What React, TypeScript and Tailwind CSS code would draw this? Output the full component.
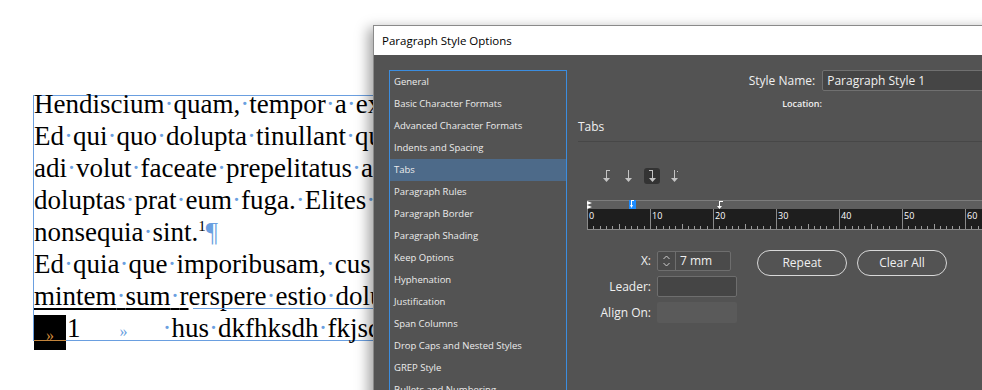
import React from 'react';

const sections = [
  'General',
  'Basic Character Formats',
  'Advanced Character Formats',
  'Indents and Spacing',
  'Tabs',
  'Paragraph Rules',
  'Paragraph Border',
  'Paragraph Shading',
  'Keep Options',
  'Hyphenation',
  'Justification',
  'Span Columns',
  'Drop Caps and Nested Styles',
  'GREP Style',
  'Bullets and Numbering',
];

function Dot() {
  return <span className="text-[#6a9fe0]">·</span>;
}

function Dotted({ text, lead }: { text: string; lead?: boolean }) {
  const words = text.split(' ');
  return (
    <>
      {words.map((w, i) => (
        <React.Fragment key={i}>
          {(i > 0 || lead) && <Dot />}
          {w}
        </React.Fragment>
      ))}
    </>
  );
}

function Document() {
  return (
    <div className="pl-[33px] pt-[95px]">
      <div className="h-[246px] w-[420px] border-y border-l border-[#6a9fe0] font-['Liberation_Serif',serif] text-[27px] leading-[32px] text-black">
        <div className="-mt-[8px] whitespace-nowrap">
          <div className="h-[32px]"><Dotted text="Hendiscium quam, tempor a exeribus" /></div>
          <div className="h-[32px]"><Dotted text="Ed qui quo dolupta tinullant quam" /></div>
          <div className="h-[32px]"><Dotted text="adi volut faceate prepelitatus aceped" /></div>
          <div className="h-[32px]"><Dotted text="doluptas prat eum fuga. Elites volor" /></div>
          <div className="h-[32px]">
            <Dotted text="nonsequia sint." />
            <span className="relative -top-[10px] text-[15px] leading-none">1</span>
            <span className="text-[#6a9fe0]">¶</span>
          </div>
          <div className="h-[32px]"><Dotted text="Ed quia que imporibusam, cus eatur" /></div>
          <div className="relative h-[32px]">
            <span className="underline decoration-2 underline-offset-[3px]"><Dotted text="mintem sum r" /></span>
            <Dotted text="erspere estio dolupta" />
            <div className="absolute left-[159px] right-0 top-[28px] h-px bg-[#6a9fe0]" />
          </div>
          <div className="h-[32px]">
            <span className="relative top-[3px] inline-flex h-[35px] w-[32px] flex-col items-center bg-black align-top">
              <span className="relative top-[4px] flex h-[25px] items-end text-[16px] leading-none text-[#d08a3a]">»</span>
              <span className="h-px w-full bg-[#c4853c]" />
            </span>
            <span className="ml-px">1</span>
            <span className="inline-block w-[82px] pl-[39px] text-[16px] leading-none text-[#6a9fe0]">»</span>
            <Dotted text="hus dkfhksdh fkjsdfh" lead />
          </div>
        </div>
      </div>
    </div>
  );
}

function TabIcon({ kind }: { kind: 'left' | 'center' | 'right' | 'decimal' }) {
  return (
    <svg width="9" height="13" viewBox="0 0 9 13" fill="#c4c4c4">
      <rect x="4" y="0" width="1" height="9" />
      {kind === 'left' && <rect x="4" y="0" width="4" height="1" />}
      {kind === 'right' && <rect x="1" y="0" width="4" height="1" />}
      {kind === 'decimal' && <rect x="7" y="1" width="1" height="1" />}
      <polygon points="1,8 8,8 4.5,12" />
    </svg>
  );
}

function Ruler() {
  const labels = [0, 10, 20, 30, 40, 50, 60, 70];
  return (
    <div className="ml-[9px] mt-[16px] w-[420px]">
      <div className="relative h-[9px] border-t border-[#7c7c7c] bg-[#5e5e5e]">
        <svg className="absolute left-0 top-0" width="6" height="8" viewBox="0 0 6 8" fill="#ffffff">
          <polygon points="0,0 5,2 0,4" />
          <polygon points="0,4 5,6 0,8" />
        </svg>
        <div className="absolute left-[42px] top-[-1px] flex h-[9px] w-[7px] justify-center bg-[#1e8cff]">
          <svg width="5" height="8" viewBox="0 0 5 8" fill="#ffffff">
            <rect x="1" y="0" width="3" height="1" />
            <rect x="1" y="0" width="1" height="5" />
            <polygon points="0,5 3,5 1.5,8" />
          </svg>
        </div>
        <svg className="absolute left-[130px] top-0" width="7" height="8" viewBox="0 0 7 8" fill="#ffffff">
          <rect x="2" y="0" width="4" height="1" />
          <rect x="2" y="0" width="1" height="5" />
          <polygon points="0,5 5,5 2.5,8" />
        </svg>
      </div>
      <div className="flex h-[21px] border-b border-l border-[#8a8a8a] bg-[#1e1e1e]">
        {labels.map((n) => (
          <div key={n} className="flex w-[63px] shrink-0 flex-col border-r border-[#8a8a8a]">
            <span className="pl-[1px] pt-[2px] text-[9px] leading-[10px] text-white">{n}</span>
            <svg className="mt-auto" width="62" height="6" viewBox="0 0 62 6" fill="#9a9a9a">
              {[1, 2, 3, 4, 5, 6, 7, 8, 9].map((i) => (
                <rect key={i} x={Math.round(i * 6.3) - 1} y={i === 5 ? 1 : 3} width="1" height={i === 5 ? 5 : 3} />
              ))}
            </svg>
          </div>
        ))}
      </div>
    </div>
  );
}

function Fields() {
  return (
    <div className="mt-[21px] flex text-[12px] text-[#f0f0f0]">
      <div className="flex w-[159px] flex-col">
        <div className="flex h-[20px] items-center">
          <span className="w-[73px] text-right">X:</span>
          <div className="ml-[6px] flex h-[20px] w-[74px] rounded-[2px] border border-[#6e6e6e] bg-[#4a4a4a]">
            <div className="flex w-[18px] items-center justify-center border-r border-[#6e6e6e]">
              <svg width="9" height="14" viewBox="0 0 9 14" fill="none" stroke="#cfcfcf" strokeWidth="1">
                <polyline points="1.5,5 4.5,2 7.5,5" />
                <polyline points="1.5,9 4.5,12 7.5,9" />
              </svg>
            </div>
            <span className="pl-[4px] leading-[18px]">7 mm</span>
          </div>
        </div>
        <div className="mt-[5px] flex h-[21px] items-center">
          <span className="w-[73px] text-right">Leader:</span>
          <div className="ml-[6px] h-[21px] w-[80px] rounded-[2px] border border-[#6e6e6e] bg-[#454545]" />
        </div>
        <div className="mt-[5px] flex h-[21px] items-center">
          <span className="w-[73px] text-right">Align On:</span>
          <div className="ml-[6px] h-[21px] w-[80px] rounded-[2px] bg-[#5a5a5a]" />
        </div>
      </div>
      <div className="-mt-px ml-[20px] flex items-start gap-[10px]">
        <button className="h-[26px] w-[90px] rounded-full border border-[#d8d8d8] text-[12px] text-[#f0f0f0]">Repeat</button>
        <button className="h-[26px] w-[90px] rounded-full border border-[#d8d8d8] text-[12px] text-[#f0f0f0]">Clear All</button>
      </div>
    </div>
  );
}

function Dialog() {
  return (
    <div className="absolute left-[373px] top-[25px] h-[380px] w-[640px] border-l border-t border-[#8a8a8a] bg-[#535353] font-['Open_Sans',sans-serif] shadow-[-5px_3px_12px_rgba(0,0,0,0.35)]">
      <div className="flex h-[29px] items-center bg-white pl-[8px] text-[11.5px] text-black">Paragraph Style Options</div>
      <div className="flex">
        <div className="ml-[15px] mt-[15px] h-[340px] w-[178px] shrink-0 border border-[#3b8de0]">
          {sections.map((s) => (
            <div
              key={s}
              className={`flex h-[22px] items-center pl-[4px] text-[9.5px] text-[#ececec] ${s === 'Tabs' ? 'bg-[#4d6a89]' : ''}`}
            >
              {s}
            </div>
          ))}
        </div>
        <div className="ml-[11px] flex w-[420px] flex-col text-[#f0f0f0]">
          <div className="mt-[15px] flex h-[21px] items-center">
            <span className="w-[243px] text-right text-[12px]">Style Name:</span>
            <div className="ml-[7px] flex h-[21px] w-[180px] items-center rounded-[2px] border border-[#707070] bg-[#454545] pl-[4px] text-[12px]">
              Paragraph Style 1
            </div>
          </div>
          <div className="mt-[6px] flex h-[14px] items-center">
            <span className="w-[244px] text-right text-[9px] font-semibold">Location:</span>
          </div>
          <div className="mt-[7px] flex h-[18px] items-center text-[12px]">Tabs</div>
          <div className="mt-[5px] h-px bg-[#474747]" />
          <div className="mt-[26px] flex h-[16px] items-center pl-[20px]">
            <div className="flex h-[16px] w-[16px] items-center justify-center"><TabIcon kind="left" /></div>
            <div className="ml-[6px] flex h-[16px] w-[16px] items-center justify-center"><TabIcon kind="center" /></div>
            <div className="ml-[8px] flex h-[16px] w-[16px] items-center justify-center rounded-[3px] bg-[#333333]"><TabIcon kind="right" /></div>
            <div className="ml-[6px] flex h-[16px] w-[16px] items-center justify-center"><TabIcon kind="decimal" /></div>
          </div>
          <Ruler />
          <Fields />
        </div>
      </div>
    </div>
  );
}

export default function App() {
  return (
    <div className="relative h-[390px] w-[982px] overflow-hidden bg-white">
      <Document />
      <Dialog />
    </div>
  );
}
